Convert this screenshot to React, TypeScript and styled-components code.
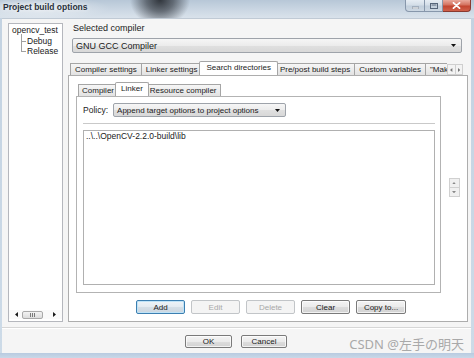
import React from "react";
import styled, { createGlobalStyle, css } from "styled-components";

const GlobalStyle = createGlobalStyle`
  html, body { margin: 0; padding: 0; background: #c9d8e6; }
  body {
    font-family: "Liberation Sans", "Noto Sans CJK SC", Arial, sans-serif;
    font-size: 8px;
    color: #1a1a1a;
  }
  * { box-sizing: border-box; }
`;

const Window = styled.div`
  position: relative;
  width: 474px;
  height: 358px;
  display: flex;
  flex-direction: column;
  overflow: hidden;
  background: linear-gradient(180deg, #c3d2e1 0%, #cddbe8 100%);
`;

const TitleBar = styled.div`
  height: 18px;
  flex: none;
  display: flex;
  align-items: flex-start;
  background:
    radial-gradient(30px 26px at 160px 0px, rgba(38, 42, 48, 0.92) 0%, rgba(60, 66, 74, 0.7) 45%, rgba(120, 130, 140, 0) 100%),
    radial-gradient(70px 12px at 40px 8px, rgba(255, 255, 255, 0.5), rgba(255, 255, 255, 0) 100%),
    linear-gradient(180deg, #b7c7d7 0%, #cbd7e3 55%, #d9e2eb 100%);
`;

const Title = styled.span`
  padding: 2px 0 0 3px;
  font-size: 8.5px;
  font-weight: bold;
  line-height: 11px;
  color: #2a323c;
  text-shadow: 0 0 4px rgba(255, 255, 255, 0.9);
`;

const WinButtons = styled.div`
  margin-left: auto;
  margin-right: 3px;
  display: flex;
  height: 12px;
`;

const WinButton = styled.div<{ $kind: "min" | "max" | "close" }>`
  height: 12px;
  display: flex;
  align-items: center;
  justify-content: center;
  border: 1px solid #8797ab;
  border-top: none;
  ${(p) =>
    p.$kind === "close"
      ? css`
          width: 28px;
          border-color: #8a3a30;
          border-left: none;
          border-bottom-right-radius: 4px;
          background: linear-gradient(180deg, #e9a99c 0%, #d4725f 45%, #c24530 55%, #d0604a 100%);
        `
      : css`
          width: ${p.$kind === "min" ? 20 : 18}px;
          background: linear-gradient(180deg, #e6edf4 0%, #d4dee8 45%, #c2cfdc 55%, #cdd8e3 100%);
          ${p.$kind === "min" ? "border-bottom-left-radius: 4px;" : "border-left: none;"}
        `}
`;

const Body = styled.div`
  flex: 1;
  display: flex;
  flex-direction: column;
  margin: 0 3px 0 2px;
  border-top: 1px solid #c0cad5;
  background: #f5f5f5;
  padding: 4px 3px 0 6px;
`;

const BottomFrame = styled.div`
  height: 5px;
  flex: none;
  background: linear-gradient(180deg, #b8cbe0, #c9d8e8);
`;

const MainRow = styled.div`
  height: 299px;
  display: flex;
  gap: 5px;
`;

const Tree = styled.div`
  flex: none;
  width: 55px;
  display: flex;
  flex-direction: column;
  border: 1px solid #b5b7bd;
  background: #fff;
  overflow: hidden;
`;

const TreeItems = styled.div`
  flex: 1;
  padding-top: 1px;
`;

const TreeRow = styled.div<{ $child?: boolean; $last?: boolean }>`
  position: relative;
  height: 10.5px;
  line-height: 10.5px;
  font-size: 8.5px;
  white-space: nowrap;
  padding-left: ${(p) => (p.$child ? 18 : 3)}px;
  ${(p) =>
    p.$child &&
    css`
      &::before {
        content: "";
        position: absolute;
        left: 12px;
        top: -2px;
        height: ${p.$last ? "7.5px" : "12.5px"};
        border-left: 1px solid #a0a0a0;
      }
      &::after {
        content: "";
        position: absolute;
        left: 12px;
        top: 5px;
        width: 5px;
        border-top: 1px solid #a0a0a0;
      }
    `}
`;

const HScroll = styled.div`
  height: 9px;
  margin-bottom: 2px;
  display: flex;
  align-items: center;
  padding: 0 3px;
  background: #fafafa;
`;

const ArrowBtn = styled.div`
  width: 9px;
  height: 9px;
  display: flex;
  align-items: center;
  justify-content: center;
`;

const Thumb = styled.div`
  width: 21px;
  height: 8px;
  margin-left: 1px;
  border: 1px solid #a9a9a9;
  border-radius: 2px;
  background: linear-gradient(180deg, #f3f3f3, #dcdcdc);
  display: flex;
  align-items: center;
  justify-content: center;
  gap: 1px;
`;

const Grip = styled.span`
  width: 1px;
  height: 4px;
  background: #7a7a7a;
`;

const Spacer = styled.div`
  flex: 1;
`;

const RightCol = styled.div`
  flex: 1;
  min-width: 0;
  display: flex;
  flex-direction: column;
`;

const Label = styled.div`
  font-size: 9px;
  line-height: 10px;
  padding-left: 5px;
`;

const Select = styled.div<{ $width?: number }>`
  height: ${(p) => (p.$width ? 14 : 15)}px;
  ${(p) => (p.$width ? `width: ${p.$width}px;` : "")}
  display: flex;
  align-items: center;
  padding: 0 5px 0 3px;
  border: 1px solid #9ea3aa;
  border-radius: 2px;
  background: linear-gradient(180deg, #f6f6f6 0%, #ececec 50%, #e0e0e0 51%, #d8d8d8 100%);
  white-space: nowrap;
`;

const CompilerSelect = styled(Select)`
  margin: 5px 6px 0 4px;
  font-size: 9px;
`;

const SelectText = styled.span`
  flex: 1;
`;

const TabStrip = styled.div<{ $inner?: boolean }>`
  height: 14px;
  margin-top: ${(p) => (p.$inner ? 0 : 8)}px;
  display: flex;
  align-items: flex-end;
  padding-left: 2px;
  flex: none;
`;

const TabList = styled.div`
  flex: 1;
  min-width: 0;
  height: 100%;
  display: flex;
  align-items: flex-end;
  overflow: hidden;
  padding-left: 2px;
  margin-left: -2px;
`;

const Tab = styled.div<{ $active?: boolean; $pad?: number }>`
  position: relative;
  flex: none;
  height: ${(p) => (p.$active ? 15 : 12)}px;
  line-height: ${(p) => (p.$active ? 12 : 11)}px;
  padding: 0 ${(p) => p.$pad ?? 3}px;
  margin-left: -1px;
  border: 1px solid #a5a5a5;
  border-bottom: none;
  white-space: nowrap;
  background: ${(p) => (p.$active ? "#fff" : "linear-gradient(180deg, #f6f6f6 0%, #ececec 50%, #e2e2e2 100%)")};
  ${(p) =>
    p.$active &&
    css`
      z-index: 2;
      margin: 0 -2px -1px -3px;
      padding: 0 ${(p.$pad ?? 3) + 2}px;
      border-radius: 2px 2px 0 0;
    `}
  &:first-child {
    margin-left: 0;
  }
`;

const ScrollArrows = styled.div`
  flex: none;
  display: flex;
  height: 11px;
  margin: 0 5px 0 0;
  align-self: flex-end;
`;

const SmallBtn = styled.div`
  width: 9px;
  height: 11px;
  display: flex;
  align-items: center;
  justify-content: center;
  border: 1px solid #cfcfcf;
  background: #f3f3f3;
  & + & {
    margin-left: -1px;
    width: 8px;
  }
`;

const OuterPane = styled.div`
  position: relative;
  z-index: 1;
  flex: 1;
  display: flex;
  flex-direction: column;
  border: 1px solid #adadad;
  background: #fff;
  padding: 6px 0 7px 7px;
`;

const UpperRow = styled.div`
  flex: 1;
  display: flex;
`;

const InnerTabs = styled.div`
  flex: 1;
  min-width: 0;
  display: flex;
  flex-direction: column;
`;

const InnerPane = styled.div`
  position: relative;
  z-index: 1;
  flex: 1;
  display: flex;
  flex-direction: column;
  border: 1px solid #b3b3b3;
  background: #fff;
  padding: 6px 5px 7px 6px;
`;

const PolicyRow = styled.div`
  height: 14px;
  display: flex;
  align-items: center;
  gap: 5px;
`;

const PolicyLabel = styled.span`
  font-size: 8.5px;
`;

const Divider = styled.div`
  margin-top: 6px;
  height: 1px;
  background: #c9c9c9;
`;

const ListBox = styled.div`
  flex: 1;
  margin-top: 6px;
  border: 1px solid #b0b0b0;
  padding: 0 2px;
  line-height: 10px;
  font-size: 8.5px;
`;

const SideCol = styled.div`
  flex: none;
  width: 26px;
  display: flex;
  flex-direction: column;
  align-items: center;
  justify-content: center;
`;

const SpinBtn = styled.div`
  width: 11px;
  height: 10px;
  display: flex;
  align-items: center;
  justify-content: center;
  border: 1px solid #d0d0d0;
  background: #f0f0f0;
  & + & {
    margin-top: -1px;
  }
`;

const ButtonRow = styled.div`
  margin-top: 7px;
  display: flex;
  justify-content: center;
  gap: 6px;
  padding-right: 1px;
`;

const Button = styled.div<{ $variant?: "default" | "disabled"; $w?: number; $h?: number }>`
  width: ${(p) => p.$w ?? 49}px;
  height: ${(p) => p.$h ?? 14}px;
  display: flex;
  align-items: center;
  justify-content: center;
  border: 1px solid #7a7a7a;
  border-radius: 2px;
  background: linear-gradient(180deg, #f4f4f4 0%, #ebebeb 50%, #dddddd 51%, #d2d2d2 100%);
  box-shadow: inset 0 0 0 1px rgba(255, 255, 255, 0.7);
  color: #1a1a1a;
  ${(p) =>
    p.$variant === "default" &&
    css`
      border-color: #3c7fb1;
      box-shadow: inset 0 0 0 1px #bfe3f7;
      background: linear-gradient(180deg, #eef4f8 0%, #e3ebf1 50%, #d5dfe7 51%, #cbd6df 100%);
    `}
  ${(p) =>
    p.$variant === "disabled" &&
    css`
      border-color: #c2c5c8;
      background: #f4f4f4;
      box-shadow: none;
      color: #a8a8a8;
    `}
`;

const Separator = styled.div`
  margin-top: 5px;
  height: 2px;
  border-top: 1px solid #d6d6d6;
  border-bottom: 1px solid #ffffff;
  margin-left: -6px;
  margin-right: -3px;
`;

const Footer = styled.div`
  flex: 1;
  display: flex;
  justify-content: center;
  align-items: flex-start;
  gap: 9px;
  padding-top: 6px;
  padding-right: 4px;
`;

const Watermark = styled.div`
  position: absolute;
  right: 10px;
  bottom: 6px;
  font-family: "Noto Sans", "Noto Sans CJK SC", sans-serif;
  font-size: 13px;
  line-height: 15px;
  color: #a9a9a9;
  white-space: nowrap;
`;

type Dir = "up" | "down" | "left" | "right";

const Caret: React.FC<{ dir: Dir; size?: number; color?: string }> = ({ dir, size = 5, color = "#111" }) => {
  const pts: Record<Dir, string> = {
    down: "0,0 6,0 3,3.5",
    up: "0,3.5 6,3.5 3,0",
    left: "3.5,0 3.5,6 0,3",
    right: "0,0 0,6 3.5,3",
  };
  const vertical = dir === "up" || dir === "down";
  return (
    <svg
      width={vertical ? size : size * 0.6}
      height={vertical ? size * 0.6 : size}
      viewBox={vertical ? "0 0 6 3.5" : "0 0 3.5 6"}
    >
      <polygon points={pts[dir]} fill={color} />
    </svg>
  );
};

const CloseGlyph = () => (
  <svg width="9" height="7" viewBox="0 0 9 7">
    <path d="M1.5 0.8 L7.5 6.2 M7.5 0.8 L1.5 6.2" stroke="#fff" strokeWidth="1.8" strokeLinecap="round" />
  </svg>
);

const MinGlyph = () => (
  <svg width="7" height="6" viewBox="0 0 7 6">
    <rect x="0" y="4" width="7" height="2" fill="#fff" stroke="#55657a" strokeWidth="0.6" />
  </svg>
);

const MaxGlyph = () => (
  <svg width="8" height="6" viewBox="0 0 8 6">
    <rect x="0.5" y="0.5" width="7" height="5" fill="none" stroke="#55657a" strokeWidth="1" />
    <rect x="1.5" y="1.5" width="5" height="1" fill="#55657a" />
  </svg>
);

const outerTabs = [
  "Compiler settings",
  "Linker settings",
  "Search directories",
  "Pre/post build steps",
  "Custom variables",
  "\"Make\" commands",
];

const innerTabs = ["Compiler", "Linker", "Resource compiler"];

export default function App() {
  return (
    <>
      <GlobalStyle />
      <Window>
        <TitleBar>
          <Title>Project build options</Title>
          <WinButtons>
            <WinButton $kind="min">
              <MinGlyph />
            </WinButton>
            <WinButton $kind="max">
              <MaxGlyph />
            </WinButton>
            <WinButton $kind="close">
              <CloseGlyph />
            </WinButton>
          </WinButtons>
        </TitleBar>
        <Body>
          <MainRow>
            <Tree>
              <TreeItems>
                <TreeRow>opencv_test</TreeRow>
                <TreeRow $child>Debug</TreeRow>
                <TreeRow $child $last>
                  Release
                </TreeRow>
              </TreeItems>
              <HScroll>
                <ArrowBtn>
                  <Caret dir="left" size={5} />
                </ArrowBtn>
                <Thumb>
                  <Grip />
                  <Grip />
                  <Grip />
                </Thumb>
                <Spacer />
                <ArrowBtn>
                  <Caret dir="right" size={5} />
                </ArrowBtn>
              </HScroll>
            </Tree>
            <RightCol>
              <Label>Selected compiler</Label>
              <CompilerSelect>
                <SelectText>GNU GCC Compiler</SelectText>
                <Caret dir="down" size={5} />
              </CompilerSelect>
              <TabStrip>
                <TabList>
                  {outerTabs.map((t) => (
                    <Tab key={t} $pad={4} $active={t === "Search directories"}>
                      {t}
                    </Tab>
                  ))}
                </TabList>
                <ScrollArrows>
                  <SmallBtn>
                    <Caret dir="left" size={4} color="#777" />
                  </SmallBtn>
                  <SmallBtn>
                    <Caret dir="right" size={4} color="#777" />
                  </SmallBtn>
                </ScrollArrows>
              </TabStrip>
              <OuterPane>
                <UpperRow>
                  <InnerTabs>
                    <TabStrip $inner>
                      <TabList>
                        {innerTabs.map((t) => (
                          <Tab key={t} $active={t === "Linker"}>
                            {t}
                          </Tab>
                        ))}
                      </TabList>
                    </TabStrip>
                    <InnerPane>
                      <PolicyRow>
                        <PolicyLabel>Policy:</PolicyLabel>
                        <Select $width={173}>
                          <SelectText>Append target options to project options</SelectText>
                          <Caret dir="down" size={5} />
                        </Select>
                      </PolicyRow>
                      <Divider />
                      <ListBox>..\..\OpenCV-2.2.0-build\lib</ListBox>
                    </InnerPane>
                  </InnerTabs>
                  <SideCol>
                    <SpinBtn>
                      <Caret dir="up" size={4} color="#8a8a8a" />
                    </SpinBtn>
                    <SpinBtn>
                      <Caret dir="down" size={4} color="#8a8a8a" />
                    </SpinBtn>
                  </SideCol>
                </UpperRow>
                <ButtonRow>
                  <Button $variant="default">Add</Button>
                  <Button $variant="disabled">Edit</Button>
                  <Button $variant="disabled">Delete</Button>
                  <Button>Clear</Button>
                  <Button $w={50}>Copy to...</Button>
                </ButtonRow>
              </OuterPane>
            </RightCol>
          </MainRow>
          <Separator />
          <Footer>
            <Button $w={47} $h={13}>
              OK
            </Button>
            <Button $w={46} $h={13}>
              Cancel
            </Button>
          </Footer>
        </Body>
        <BottomFrame />
        <Watermark>CSDN @左手の明天</Watermark>
      </Window>
    </>
  );
}
